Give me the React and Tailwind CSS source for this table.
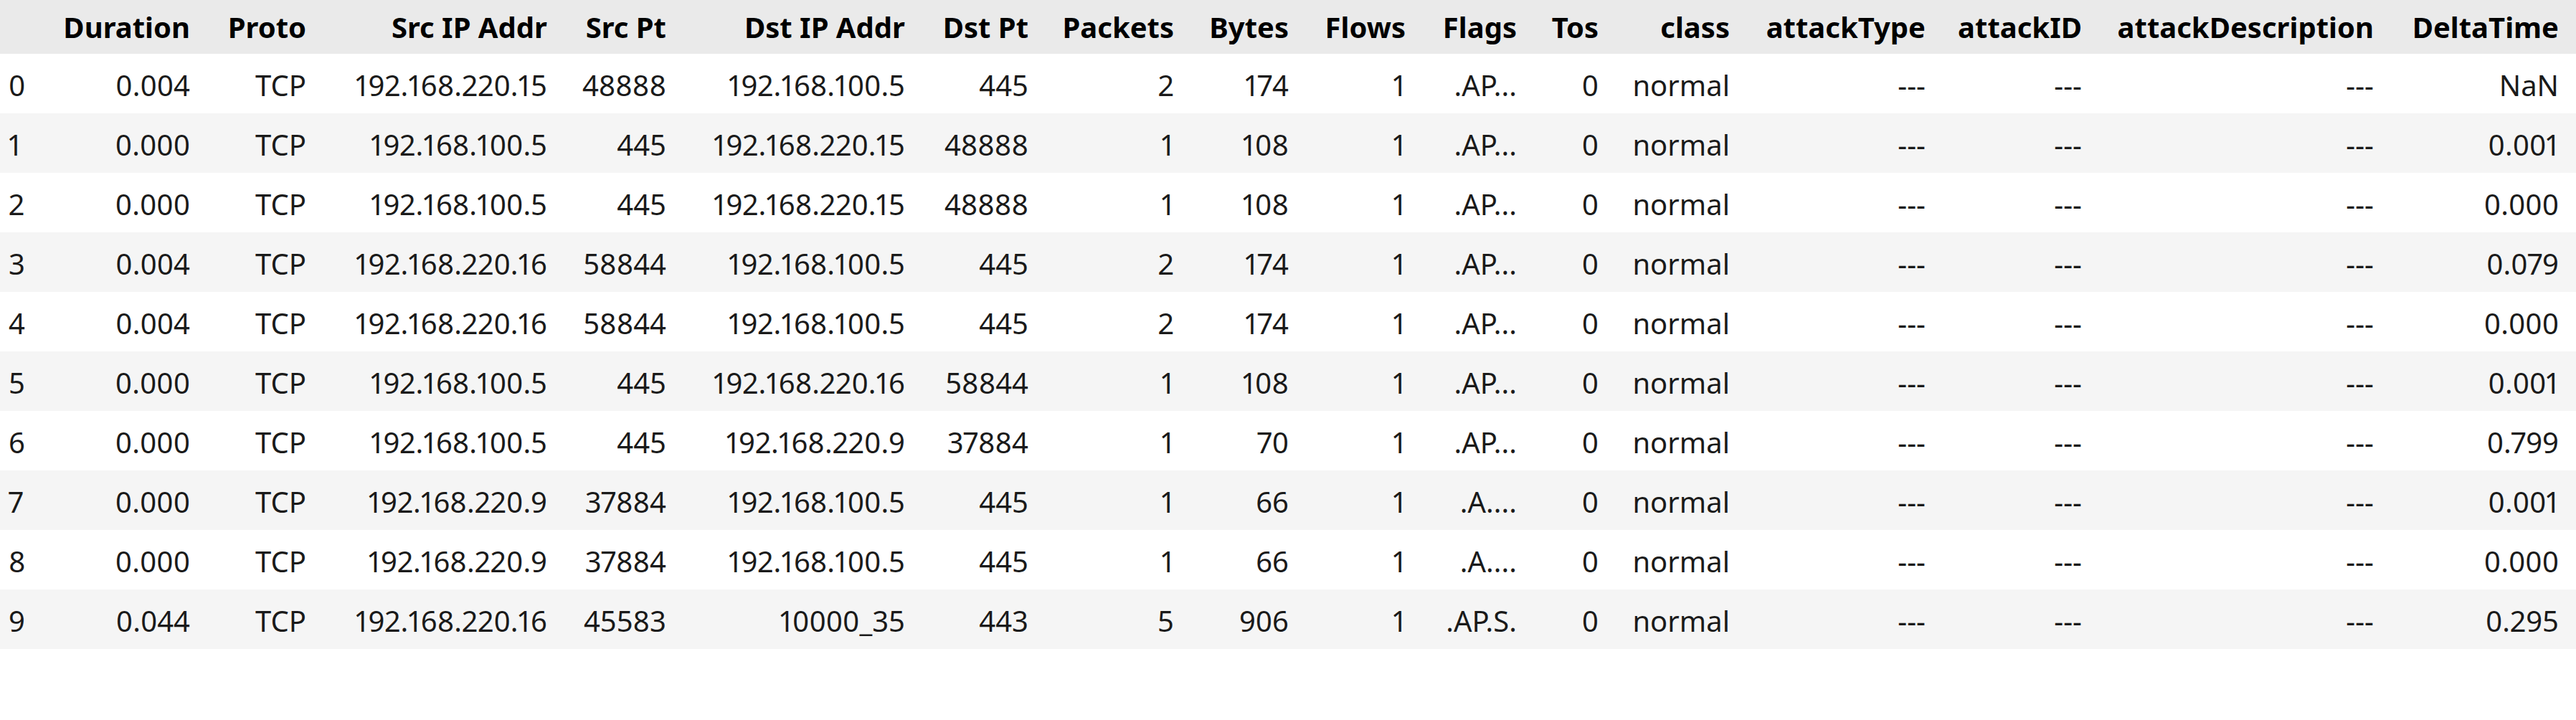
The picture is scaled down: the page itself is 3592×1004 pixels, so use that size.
import React from 'react';

// Column layout: name, width of the cell, how the cell is aligned
const columns = [
  { key: 'idx', label: '', w: 'w-[60px]' },
  { key: 'dur', label: 'Duration', w: 'w-[229px]' },
  { key: 'proto', label: 'Proto', w: 'w-[162px]' },
  { key: 'srcIp', label: 'Src IP Addr', w: 'w-[336px]' },
  { key: 'srcPt', label: 'Src Pt', w: 'w-[166px]' },
  { key: 'dstIp', label: 'Dst IP Addr', w: 'w-[333px]' },
  { key: 'dstPt', label: 'Dst Pt', w: 'w-[172px]' },
  { key: 'packets', label: 'Packets', w: 'w-[203px]' },
  { key: 'bytes', label: 'Bytes', w: 'w-[160px]' },
  { key: 'flows', label: 'Flows', w: 'w-[163px]' },
  { key: 'flags', label: 'Flags', w: 'w-[155px]' },
  { key: 'tos', label: 'Tos', w: 'w-[114px]' },
  { key: 'cls', label: 'class', w: 'w-[183px]' },
  { key: 'type', label: 'attackType', w: 'w-[273px]' },
  { key: 'id', label: 'attackID', w: 'w-[218px]' },
  { key: 'desc', label: 'attackDescription', w: 'w-[407px]' },
  { key: 'delta', label: 'DeltaTime', w: 'w-[258px]' },
];

const rows = [
  ['0', '0.004', 'TCP', '192.168.220.15', '48888', '192.168.100.5', '445', '2', '174', '1', '.AP...', '0', 'normal', '---', '---', '---', 'NaN'],
  ['1', '0.000', 'TCP', '192.168.100.5', '445', '192.168.220.15', '48888', '1', '108', '1', '.AP...', '0', 'normal', '---', '---', '---', '0.001'],
  ['2', '0.000', 'TCP', '192.168.100.5', '445', '192.168.220.15', '48888', '1', '108', '1', '.AP...', '0', 'normal', '---', '---', '---', '0.000'],
  ['3', '0.004', 'TCP', '192.168.220.16', '58844', '192.168.100.5', '445', '2', '174', '1', '.AP...', '0', 'normal', '---', '---', '---', '0.079'],
  ['4', '0.004', 'TCP', '192.168.220.16', '58844', '192.168.100.5', '445', '2', '174', '1', '.AP...', '0', 'normal', '---', '---', '---', '0.000'],
  ['5', '0.000', 'TCP', '192.168.100.5', '445', '192.168.220.16', '58844', '1', '108', '1', '.AP...', '0', 'normal', '---', '---', '---', '0.001'],
  ['6', '0.000', 'TCP', '192.168.100.5', '445', '192.168.220.9', '37884', '1', '70', '1', '.AP...', '0', 'normal', '---', '---', '---', '0.799'],
  ['7', '0.000', 'TCP', '192.168.220.9', '37884', '192.168.100.5', '445', '1', '66', '1', '.A....', '0', 'normal', '---', '---', '---', '0.001'],
  ['8', '0.000', 'TCP', '192.168.220.9', '37884', '192.168.100.5', '445', '1', '66', '1', '.A....', '0', 'normal', '---', '---', '---', '0.000'],
  ['9', '0.044', 'TCP', '192.168.220.16', '45583', '10000_35', '443', '5', '906', '1', '.AP.S.', '0', 'normal', '---', '---', '---', '0.295'],
];

export default function App() {
  return (
    <div className="w-[3592px] h-[1004px] bg-white font-['Noto_Sans',sans-serif] text-[40px] proportional-nums">
      <table className="table-fixed border-collapse w-[3592px]">
        <colgroup>
          {columns.map(c => <col key={c.key} className={c.w} />)}
        </colgroup>
        <thead>
          <tr className="h-[75px] bg-[#eaeaea]">
            {columns.map(c => (
              <th key={c.key} className="pr-[24px] text-right font-bold text-black whitespace-nowrap leading-none">
                {c.label}
              </th>
            ))}
          </tr>
        </thead>
        <tbody>
          {rows.map((r, i) => (
            <tr key={i} className={i % 2 ? 'h-[83px] bg-[#f5f5f5]' : 'h-[83px] bg-white'}>
              {r.map((v, j) => (
                <td
                  key={j}
                  className={
                    j === 0
                      ? 'pl-[12px] pt-[4px] text-left text-[#1a1a1a] whitespace-nowrap leading-none'
                      : 'pr-[24px] pt-[4px] text-right text-[#1a1a1a] whitespace-nowrap leading-none'
                  }
                >
                  {v}
                </td>
              ))}
            </tr>
          ))}
        </tbody>
      </table>
    </div>
  );
}
